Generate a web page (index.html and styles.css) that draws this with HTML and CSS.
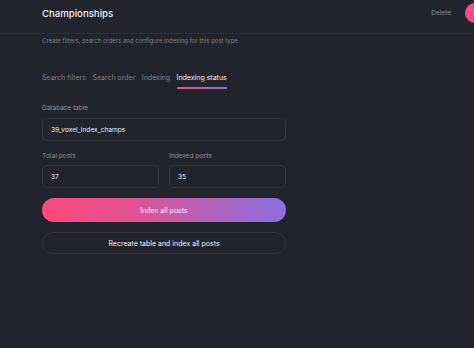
FILE: index.html
```html
<!DOCTYPE html>
<html lang="en">
<head>
<meta charset="utf-8">
<link rel="stylesheet" href="styles.css">
</head>
<body>
<header class="header">
  <h1 class="title">Championships</h1>
  <div class="actions">
    <span class="delete">Delete</span>
    <span class="save"></span>
  </div>
</header>
<p class="sub">Create filters, search orders and configure indexing for this post type</p>
<nav class="tabs">
  <span class="tab">Search filters</span>
  <span class="tab">Search order</span>
  <span class="tab">Indexing</span>
  <span class="tab active">Indexing status</span>
</nav>
<main class="panel">
  <div class="field">
    <label class="label">Database table</label>
    <div class="input">39_voxel_index_champs</div>
  </div>
  <div class="row">
    <div class="field">
      <label class="label">Total posts</label>
      <div class="input">37</div>
    </div>
    <div class="field">
      <label class="label">Indexed posts</label>
      <div class="input">35</div>
    </div>
  </div>
  <div class="btn primary">Index all posts</div>
  <div class="btn ghost">Recreate table and index all posts</div>
</main>
</body>
</html>
```
FILE: styles.css
```css
* { box-sizing: border-box; }
html, body { margin: 0; padding: 0; }
body {
  background: #22242b;
  font-family: Inter, "Liberation Sans", sans-serif;
  color: #e6e7ea;
  width: 474px;
  height: 348px;
  overflow: hidden;
}
.header {
  height: 34px;
  border-bottom: 1px solid #2e3038;
  display: flex;
  justify-content: space-between;
  align-items: flex-start;
  padding-left: 42px;
}
.title {
  margin: 7px 0 0;
  font-size: 9.6px;
  line-height: 14px;
  font-weight: 500;
  color: #eceef1;
}
.actions {
  display: flex;
  align-items: flex-start;
  gap: 14px;
}
.delete {
  margin-top: 9px;
  font-size: 6.5px;
  line-height: 8px;
  color: #8c8f97;
}
.save {
  margin-top: 3px;
  width: 30px;
  height: 20px;
  border-radius: 10px;
  background: #fb4b7c;
  margin-right: -21px;
}
.sub {
  margin: 3px 0 0;
  padding-left: 42px;
  font-size: 6px;
  line-height: 8px;
  color: #7d8089;
}
.tabs {
  margin-top: 28px;
  padding-left: 42px;
  display: flex;
  gap: 6.5px;
}
.tab {
  font-size: 7px;
  line-height: 10px;
  padding-bottom: 4px;
  color: #7e818a;
  border-bottom: 2px solid transparent;
}
.tab.active {
  color: #eef0f3;
  border-image: linear-gradient(90deg, #f8497c, #8d6fe2) 1;
}
.panel {
  margin: 15px 0 0 42px;
  width: 244px;
  display: flex;
  flex-direction: column;
}
.field {
  display: flex;
  flex-direction: column;
  gap: 5px;
}
.label {
  font-size: 6.5px;
  line-height: 9px;
  color: #8e9199;
}
.input {
  height: 23px;
  border: 1px solid #32353d;
  border-radius: 5px;
  padding: 0 8px;
  display: flex;
  align-items: center;
  font-size: 6.6px;
  color: #eef0f3;
}
.row {
  margin-top: 11px;
  display: grid;
  grid-template-columns: 1fr 1fr;
  gap: 10px;
}
.row .field { gap: 4px; }
.btn {
  height: 23px;
  border-radius: 12px;
  display: flex;
  align-items: center;
  justify-content: center;
  font-size: 7px;
  color: #f1f2f4;
}
.primary {
  margin-top: 10px;
  height: 24px;
  background: linear-gradient(90deg, #fd4a7c 0%, #e45290 35%, #b263bd 70%, #8b70e2 100%);
}
.ghost {
  margin-top: 10px;
  height: 22px;
  border: 1px solid #2f323a;
}
```
